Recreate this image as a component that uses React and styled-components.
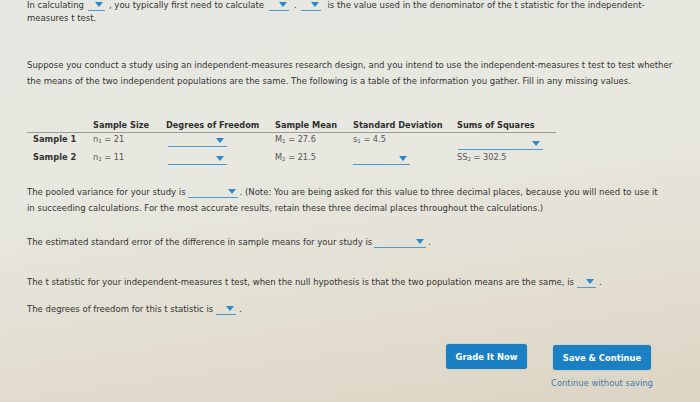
import React from 'react';
import styled, { createGlobalStyle } from 'styled-components';

const Global = createGlobalStyle`
  html, body {
    margin: 0;
    padding: 0;
  }
  body {
    width: 700px;
    height: 402px;
    overflow: hidden;
    background: linear-gradient(172deg, #e5e7e0 0%, #e8e8e0 40%, #e2ddd0 75%, #dcd4c4 100%);
    font-family: 'DejaVu Sans', Verdana, sans-serif;
    color: #353535;
  }
`;

const Page = styled.div`
  padding: 0 10px 0 27px;
  font-size: 8.5px;
`;

const Para = styled.p`
  margin: ${(p) => p.$top || 0}px 0 0 0;
  line-height: ${(p) => p.$lh || 13}px;
  white-space: nowrap;
`;

const Drop = styled.span`
  display: inline-block;
  position: relative;
  width: ${(p) => p.$w}px;
  height: 9px;
  margin: 0 ${(p) => p.$gap ?? 3}px;
  border-bottom: 1.5px solid #4b9bd2;
  vertical-align: -3px;

  &::after {
    content: '';
    position: absolute;
    right: 2px;
    top: 1px;
    border-left: 4px solid transparent;
    border-right: 4px solid transparent;
    border-top: 5px solid #2a88cf;
  }
`;

const Table = styled.div`
  display: grid;
  grid-template-columns: 66px 73px 109px 78px 104px 99px;
  width: 529px;
  margin-top: 31px;
`;

const Head = styled.div`
  font-weight: bold;
  font-size: 8.2px;
  color: #303030;
  padding-bottom: 1px;
  border-bottom: 1.5px solid #9a9a96;
  height: 11px;
  line-height: 11px;
  white-space: nowrap;
`;

const Cell = styled.div`
  height: 18px;
  padding-top: 1px;
  box-sizing: border-box;
  line-height: 10px;
  white-space: nowrap;
  font-weight: ${(p) => (p.$bold ? 'bold' : 'normal')};
  padding-left: ${(p) => p.$pad || 0}px;
  font-size: ${(p) => (p.$bold ? '8.3px' : '8.2px')};
  color: ${(p) => (p.$bold ? '#333' : '#555')};
`;

const CellDrop = styled.span`
  display: block;
  position: relative;
  width: ${(p) => p.$w}px;
  height: 9px;
  margin-left: ${(p) => p.$ml || 0}px;
  margin-top: ${(p) => p.$mt || 3}px;
  border-bottom: 1.5px solid #4b9bd2;

  &::after {
    content: '';
    position: absolute;
    right: 3px;
    top: 1px;
    border-left: 4px solid transparent;
    border-right: 4px solid transparent;
    border-top: 5px solid #2a88cf;
  }
`;

const Sub = styled.sub`
  font-size: 5.5px;
  vertical-align: -1px;
`;

const Actions = styled.div`
  display: flex;
  justify-content: flex-end;
  gap: 25px;
  width: 625px;
  margin-top: 28px;
`;

const ButtonCol = styled.div`
  display: flex;
  flex-direction: column;
  align-items: center;
  width: 100px;
  gap: 8px;
`;

const Button = styled.button`
  width: ${(p) => p.$w}px;
  height: 25px;
  border: none;
  border-radius: 3px;
  background: #1b80c3;
  color: #fff;
  font-family: 'DejaVu Sans', Verdana, sans-serif;
  font-weight: bold;
  font-size: 8.4px;
  padding: 0;
  margin-top: ${(p) => p.$mt || 0}px;
  box-shadow: 0 0 1px rgba(0, 60, 110, 0.5);
`;

const TextLink = styled.a`
  color: #3d7bb0;
  font-size: 8.4px;
  line-height: 10px;
  white-space: nowrap;
  text-decoration: none;
`;

export default function App() {
  return (
    <>
      <Global />
      <Page>
        <Para $top={-1}>
          In calculating
          <Drop $w={17} $gap={4} />, you typically first need to calculate
          <Drop $w={20} $gap={5} />.
          <Drop $w={20} $gap={4} /> is the value used in the denominator of the t statistic for the independent-
          <br />
          measures t test.
        </Para>

        <Para $top={32} $lh={16}>
          Suppose you conduct a study using an independent-measures research design, and you intend to use the independent-measures t test to test whether
          <br />
          the means of the two independent populations are the same. The following is a table of the information you gather. Fill in any missing values.
        </Para>

        <Table>
          <Head />
          <Head>Sample Size</Head>
          <Head>Degrees of Freedom</Head>
          <Head>Sample Mean</Head>
          <Head>Standard Deviation</Head>
          <Head>Sums of Squares</Head>

          <Cell $bold $pad={6}>Sample 1</Cell>
          <Cell>n<Sub>1</Sub>&nbsp;= 21</Cell>
          <Cell><CellDrop $w={59} $ml={2} /></Cell>
          <Cell>M<Sub>1</Sub>&nbsp;= 27.6</Cell>
          <Cell>s<Sub>1</Sub>&nbsp;= 4.5</Cell>
          <Cell><CellDrop $w={85} $ml={1} $mt={6} /></Cell>

          <Cell $bold $pad={6}>Sample 2</Cell>
          <Cell>n<Sub>2</Sub>&nbsp;= 11</Cell>
          <Cell><CellDrop $w={59} $ml={2} /></Cell>
          <Cell>M<Sub>2</Sub>&nbsp;= 21.5</Cell>
          <Cell><CellDrop $w={57} /></Cell>
          <Cell>SS<Sub>2</Sub>&nbsp;= 302.5</Cell>
        </Table>

        <Para $top={15} $lh={16}>
          The pooled variance for your study is
          <Drop $w={50} $gap={2} />. (Note: You are being asked for this value to three decimal places, because you will need to use it
          <br />
          in succeeding calculations. For the most accurate results, retain these three decimal places throughout the calculations.)
        </Para>

        <Para $top={20}>
          The estimated standard error of the difference in sample means for your study is
          <Drop $w={52} $gap={2} />.
        </Para>

        <Para $top={27}>
          The t statistic for your independent-measures t test, when the null hypothesis is that the two population means are the same, is
          <Drop $w={19} $gap={3} />.
        </Para>

        <Para $top={14}>
          The degrees of freedom for this t statistic is
          <Drop $w={20} $gap={3} />.
        </Para>

        <Actions>
          <Button $w={81}>Grade It Now</Button>
          <ButtonCol>
            <Button $w={98} $mt={1}>Save &amp; Continue</Button>
            <TextLink href="#">Continue without saving</TextLink>
          </ButtonCol>
        </Actions>
      </Page>
    </>
  );
}
